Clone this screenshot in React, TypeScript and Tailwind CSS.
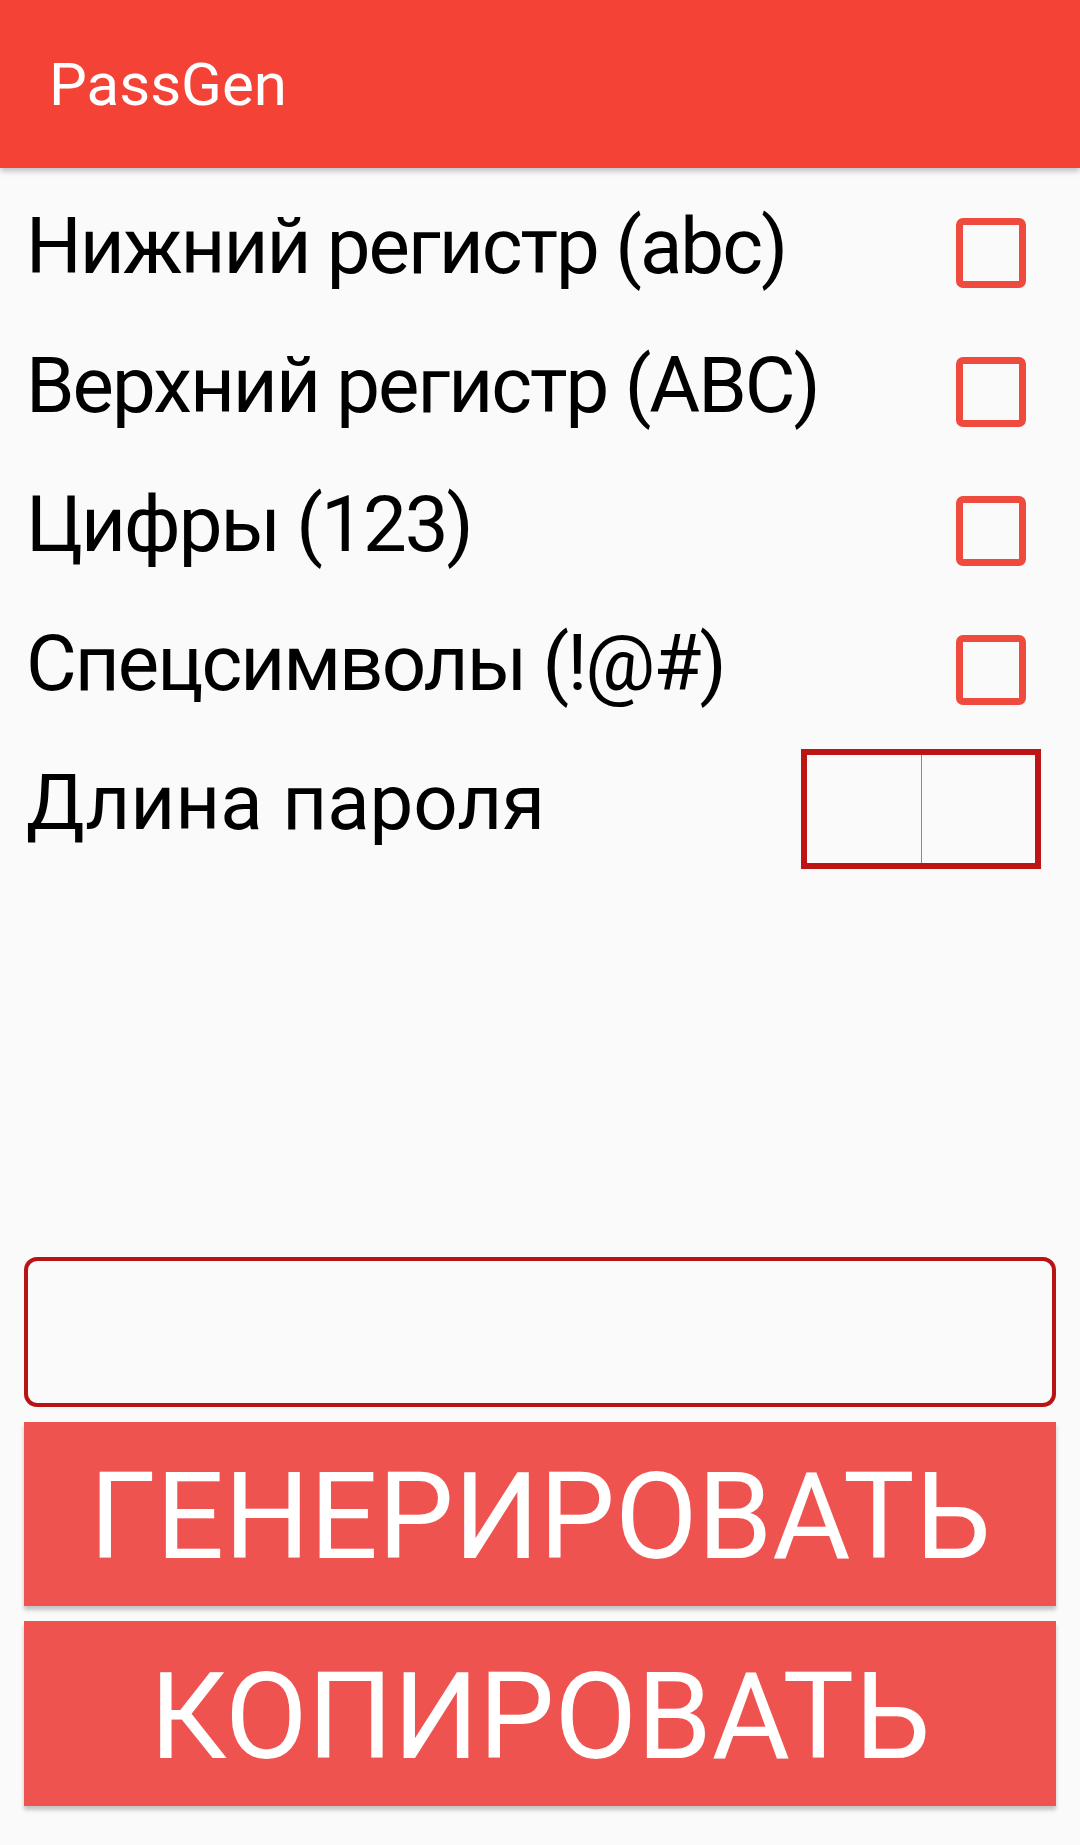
import React from "react";

const font = { fontFamily: "Roboto, 'Noto Sans', sans-serif" };

function Checkbox() {
  return (
    <div className="w-[70px] h-[70px] rounded-[7px] border-[7px] border-[#ee4a3d] bg-transparent" />
  );
}

function Row({ label, tight, children }: { label: string; tight?: boolean; children: React.ReactNode }) {
  return (
    <div className="h-[139px] flex items-center justify-between pl-[26px]">
      <span
        className={
          tight
            ? "text-[78px] leading-[92px] text-black pb-[12px] whitespace-nowrap tracking-[-2px]"
            : "text-[78px] leading-[92px] text-black pb-[12px] whitespace-nowrap tracking-[0px]"
        }
      >
        {label}
      </span>
      {children}
    </div>
  );
}

export default function App() {
  return (
    <div className="w-[1080px] h-[1845px] bg-[#fafafa] flex flex-col" style={font}>
      <div className="h-[168px] bg-[#f44336] flex items-center pl-[49px] shadow-[0_3px_6px_rgba(0,0,0,0.25)] relative z-10">
        <span className="text-[60px] text-white leading-none pt-[2px]">PassGen</span>
      </div>
      <div className="pt-[15px] flex flex-col">
        <Row label="Нижний регистр (abc)" tight>
          <div className="mr-[54px]"><Checkbox /></div>
        </Row>
        <Row label="Верхний регистр (ABC)" tight>
          <div className="mr-[54px]"><Checkbox /></div>
        </Row>
        <Row label="Цифры (123)" tight>
          <div className="mr-[54px]"><Checkbox /></div>
        </Row>
        <Row label="Спецсимволы (!@#)" tight>
          <div className="mr-[54px]"><Checkbox /></div>
        </Row>
        <Row label="Длина пароля">
          <div className="mr-[39px] w-[240px] h-[120px] border-[6px] border-[#bd1414] flex">
            <div className="flex-1 border-r border-r-[#8a8a8a]" />
            <div className="flex-1" />
          </div>
        </Row>
      </div>
      <div className="mt-[379px] mx-[24px] h-[150px] rounded-[13px] border-[4px] border-[#b91414] bg-[#fafafa]" />
      <button className="mt-[15px] mx-[24px] h-[184px] bg-[#ef5350] text-white text-[120px] leading-none flex items-center justify-center shadow-[0_4px_4px_rgba(0,0,0,0.22)] pt-[6px]">
        ГЕНЕРИРОВАТЬ
      </button>
      <button className="mt-[15px] mx-[24px] h-[185px] bg-[#ef5350] text-white text-[120px] leading-none flex items-center justify-center shadow-[0_4px_4px_rgba(0,0,0,0.22)] pt-[6px]">
        КОПИРОВАТЬ
      </button>
    </div>
  );
}
